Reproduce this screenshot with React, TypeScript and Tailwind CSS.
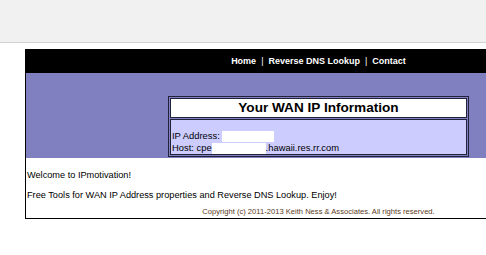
export default function App() {
  return (
    <div className="h-[255px] w-[486px] overflow-hidden bg-white font-['Liberation_Sans',Arial,sans-serif] text-black">
      <div className="h-[43px] border-b border-[#d3d3d3] bg-[#f1f1f1]" />
      <div className="ml-[25px] mt-[6px] w-[586px] border-b border-l border-black">
        <nav className="flex h-[24px] items-center justify-center gap-[5px] bg-black pt-px text-[9px] font-bold text-white">
          <span>Home</span>
          <span className="font-normal">|</span>
          <span>Reverse DNS Lookup</span>
          <span className="font-normal">|</span>
          <span>Contact</span>
        </nav>
        <div className="flex h-[85px] items-end justify-center bg-[#8080c0] pb-px">
          <div className="flex w-[301px] flex-col gap-px border border-[#22223a] p-px">
            <div className="flex h-[20px] items-center justify-center border border-[#22223a] bg-white text-[13.6px] font-bold leading-none">
              Your WAN IP Information
            </div>
            <div className="flex h-[36px] flex-col justify-end border border-[#22223a] bg-[#ccccff] pl-px text-[9.4px] leading-[12px]">
              <div className="flex items-center">
                IP Address:
                <span className="ml-[2px] inline-block h-[11px] w-[52px] bg-white" />
              </div>
              <div className="flex items-center">
                Host: cpe
                <span className="inline-block h-[11px] w-[54px] bg-white" />
                .hawaii.res.rr.com
              </div>
            </div>
          </div>
        </div>
        <div className="flex flex-col pt-[11px] pb-px text-[9.2px] leading-[13px]">
          <p className="pl-px">Welcome to IPmotivation!</p>
          <p className="mt-[7px] pl-px">Free Tools for WAN IP Address properties and Reverse DNS Lookup. Enjoy!</p>
          <p className="mt-[5px] text-center text-[7.6px] leading-[10px] text-[#5a3a1a]">
            Copyright (c) 2011-2013 Keith Ness &amp; Associates. All rights reserved.
          </p>
        </div>
      </div>
    </div>
  );
}
